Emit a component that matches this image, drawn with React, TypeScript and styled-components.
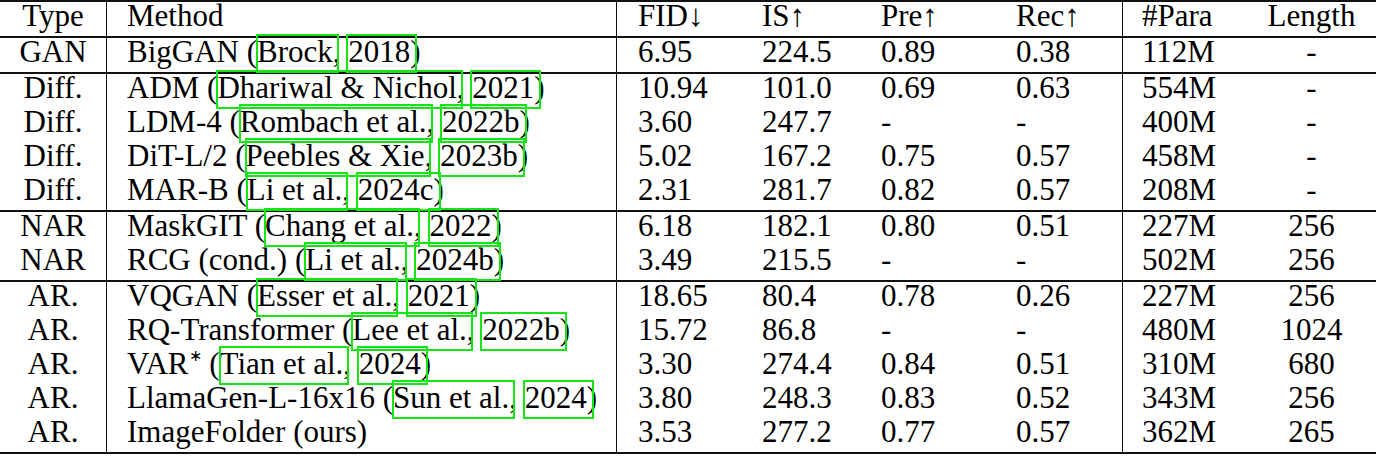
import React from "react";
import styled, { createGlobalStyle } from "styled-components";

const GlobalStyle = createGlobalStyle`
  html, body { margin: 0; padding: 0; background: #fff; }
  body { font-family: "Liberation Serif", serif; color: #000; }
`;

const COLS = "107px 510px 124px 119px 135px 128px 124px 129px";

const Sheet = styled.div`
  width: 1376px;
  font-family: "Liberation Serif", serif;
  font-size: 31px;
  line-height: 28px;
  color: #000;
  border-top: 2px solid #111;
  border-bottom: 2px solid #111;
`;

const Section = styled.div<{ $ruled?: boolean }>`
  display: grid;
  grid-template-columns: ${COLS};
  grid-auto-rows: 34px;
  border-top: ${(p) => (p.$ruled ? "2px solid #111" : "none")};
`;

const Cell = styled.div<{ $center?: boolean; $rule?: boolean; $pad?: number }>`
  box-sizing: border-box;
  padding-left: ${(p) => p.$pad ?? 0}px;
  white-space: nowrap;
  text-align: ${(p) => (p.$center ? "center" : "left")};
  border-right: ${(p) => (p.$rule ? "1px solid #111" : "none")};
`;

const Link = styled.span<{ $year?: boolean }>`
  position: relative;
  &::after {
    content: "";
    position: absolute;
    left: ${(p) => (p.$year ? -2 : -1)}px;
    right: ${(p) => (p.$year ? -7 : -6)}px;
    top: 0;
    bottom: -4px;
    border: 2px solid #14e614;
    pointer-events: none;
    z-index: 1;
  }
`;

const Star = styled.span`
  display: inline-block;
  width: 12px;
  margin-left: 1px;
  text-align: center;
  font-size: 16px;
  line-height: 0;
  vertical-align: 13px;
`;

type Entry = {
  type: string;
  name: string;
  star?: boolean;
  author?: string;
  year?: string;
  v: string[];
};

const groups: Entry[][] = [
  [
    { type: "GAN", name: "BigGAN", author: "Brock", year: "2018", v: ["6.95", "224.5", "0.89", "0.38", "112M", "-"] },
  ],
  [
    { type: "Diff.", name: "ADM", author: "Dhariwal & Nichol", year: "2021", v: ["10.94", "101.0", "0.69", "0.63", "554M", "-"] },
    { type: "Diff.", name: "LDM-4", author: "Rombach et al.", year: "2022b", v: ["3.60", "247.7", "-", "-", "400M", "-"] },
    { type: "Diff.", name: "DiT-L/2", author: "Peebles & Xie", year: "2023b", v: ["5.02", "167.2", "0.75", "0.57", "458M", "-"] },
    { type: "Diff.", name: "MAR-B", author: "Li et al.", year: "2024c", v: ["2.31", "281.7", "0.82", "0.57", "208M", "-"] },
  ],
  [
    { type: "NAR", name: "MaskGIT", author: "Chang et al.", year: "2022", v: ["6.18", "182.1", "0.80", "0.51", "227M", "256"] },
    { type: "NAR", name: "RCG (cond.)", author: "Li et al.", year: "2024b", v: ["3.49", "215.5", "-", "-", "502M", "256"] },
  ],
  [
    { type: "AR.", name: "VQGAN", author: "Esser et al.", year: "2021", v: ["18.65", "80.4", "0.78", "0.26", "227M", "256"] },
    { type: "AR.", name: "RQ-Transformer", author: "Lee et al.", year: "2022b", v: ["15.72", "86.8", "-", "-", "480M", "1024"] },
    { type: "AR.", name: "VAR", star: true, author: "Tian et al.", year: "2024", v: ["3.30", "274.4", "0.84", "0.51", "310M", "680"] },
    { type: "AR.", name: "LlamaGen-L-16x16", author: "Sun et al.", year: "2024", v: ["3.80", "248.3", "0.83", "0.52", "343M", "256"] },
    { type: "AR.", name: "ImageFolder (ours)", v: ["3.53", "277.2", "0.77", "0.57", "362M", "265"] },
  ],
];

const pads = [0, 20, 21, 21, 21, 21, 19, 0];
const centered = [true, false, false, false, false, false, false, true];
const rules = [true, true, false, false, false, true, false, false];
const headers = ["Type", "Method", "FID↓", "IS↑", "Pre↑", "Rec↑", "#Para", "Length"];

export default function App() {
  return (
    <>
      <GlobalStyle />
      <Sheet>
        <Section>
          {headers.map((h, i) => (
            <Cell key={h} $center={centered[i]} $rule={rules[i]} $pad={pads[i]}>
              {h}
            </Cell>
          ))}
        </Section>
        {groups.map((g, gi) => (
          <Section key={gi} $ruled>
            {g.map((e) => (
              <React.Fragment key={e.name}>
                <Cell $center $rule>
                  {e.type}
                </Cell>
                <Cell $rule $pad={20}>
                  {e.name}
                  {e.star && <Star>∗</Star>}
                  {e.author && (
                    <>
                      {" ("}
                      <Link>{e.author}</Link>
                      {", "}
                      <Link $year>{e.year}</Link>
                      {")"}
                    </>
                  )}
                </Cell>
                {e.v.map((val, i) => (
                  <Cell key={i} $center={centered[i + 2]} $rule={rules[i + 2]} $pad={pads[i + 2]}>
                    {val}
                  </Cell>
                ))}
              </React.Fragment>
            ))}
          </Section>
        ))}
      </Sheet>
    </>
  );
}
